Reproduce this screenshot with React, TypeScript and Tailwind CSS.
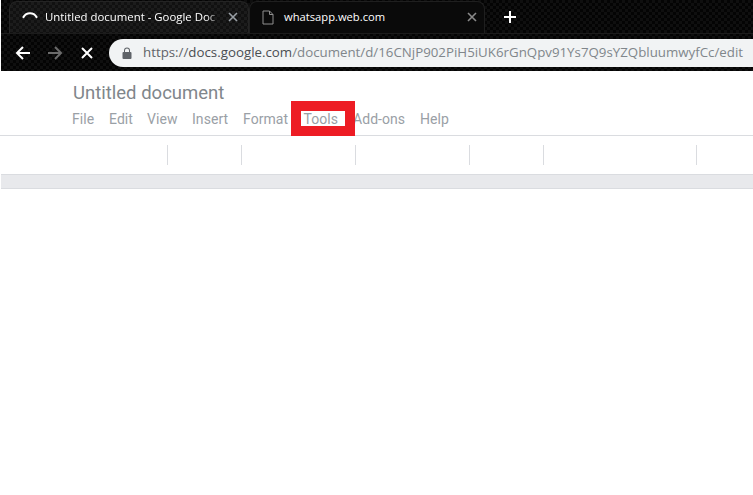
import React from "react";

const sans = "font-['Open_Sans','Noto_Sans',sans-serif]";

function Menu({ label, w }: { label: string; w: string }) {
  return <span className={`${w} shrink-0`}>{label}</span>;
}

function Sep({ w }: { w: string }) {
  return <div className={`${w} h-[20px] shrink-0 border-r border-[#dadce0]`} />;
}

export default function App() {
  const checker =
    "bg-[repeating-conic-gradient(#0f0f0f_0%_25%,#040404_0%_50%)] bg-[length:6px_6px]";
  const activeChecker =
    "bg-[repeating-conic-gradient(#1c1c1c_0%_25%,#111111_0%_50%)] bg-[length:6px_6px]";
  return (
    <div className="w-[753px] h-[495px] bg-white overflow-hidden relative font-['Roboto',sans-serif]">
      <div className={`ml-[1px] h-[71px] ${checker} flex flex-col`}>
        <div className="h-[33px] flex items-end pl-[8px] shrink-0">
          <div className={`w-[240px] h-[32px] ${activeChecker} border-t border-x border-[#242424] rounded-t-[8px] flex items-center pl-[11px] ${sans}`}>
            <svg width="18" height="16" viewBox="0 0 18 16" fill="none" className="shrink-0 -mt-[1px]">
              <path d="M2.5 8A7.5 7.5 0 0 1 15.5 8" stroke="#fff" strokeWidth="2.2" strokeLinecap="round" />
            </svg>
            <span className="ml-[6px] -mt-[1px] w-[178px] whitespace-nowrap text-[11.4px] text-white [mask-image:linear-gradient(to_right,#000_90%,transparent)]">
              Untitled document - Google Doc
            </span>
            <svg width="10" height="10" viewBox="0 0 10 10" className="ml-[5px] -mt-[1px] shrink-0" stroke="#9aa0a6" strokeWidth="1.6">
              <path d="M1 1L9 9M9 1L1 9" />
            </svg>
          </div>
          <div className={`w-[236px] h-[32px] bg-[#0a0a0a] border-t border-x border-[#1f1f1f] rounded-t-[8px] flex items-center pl-[12px] ${sans}`}>
            <svg width="12" height="15" viewBox="0 0 12 15" fill="none" stroke="#8f8f8f" strokeWidth="1" className="shrink-0 -mt-[1px]">
              <path d="M1 1H7.5L11 4.5V14H1Z" />
              <path d="M7.5 1V4.5H11" />
            </svg>
            <span className="ml-[10px] -mt-[1px] w-[183px] text-[11.2px] text-white whitespace-nowrap">whatsapp.web.com</span>
            <svg width="10" height="10" viewBox="0 0 10 10" className="-mt-[1px] shrink-0" stroke="#8a8a8a" strokeWidth="1.6">
              <path d="M1 1L9 9M9 1L1 9" />
            </svg>
          </div>
          <svg width="12" height="12" viewBox="0 0 12 12" className="ml-[19px] mb-[10px] shrink-0" stroke="#fff" strokeWidth="2">
            <path d="M6 0V12M0 6H12" />
          </svg>
        </div>
        <div className="flex-1 flex items-center border-t border-[#1c1c1c]">
          <svg width="16" height="16" viewBox="0 0 16 16" fill="none" stroke="#fff" strokeWidth="2" className="ml-[14px] shrink-0">
            <path d="M15 8H2M8 2L2 8L8 14" />
          </svg>
          <svg width="16" height="16" viewBox="0 0 16 16" fill="none" stroke="#6b6b6b" strokeWidth="2" className="ml-[16px] shrink-0">
            <path d="M1 8H14M8 2L14 8L8 14" />
          </svg>
          <svg width="12" height="12" viewBox="0 0 12 12" stroke="#fff" strokeWidth="2" className="ml-[18px] shrink-0">
            <path d="M1 1L11 11M11 1L1 11" />
          </svg>
          <div className={`ml-[16px] h-[28px] flex-1 bg-[#f1f3f4] rounded-l-[14px] flex items-center pl-[13px] ${sans}`}>
            <svg width="10" height="12" viewBox="0 0 10 12" fill="#5f6368" className="shrink-0">
              <path d="M2 5V3.5a3 3 0 0 1 6 0V5H7V3.5a2 2 0 0 0-4 0V5Z" />
              <rect x="0.5" y="5" width="9" height="7" rx="1" />
            </svg>
            <span className="ml-[11px] text-[13.3px] whitespace-nowrap text-[#80868b]">
              <span className="text-[#5f6368]">https://</span><span className="text-[#4a4e52]">docs.google.com</span>/document/d/16CNjP902PiH5iUK6rGnQpv91Ys7Q9sYZQbluumwyfCc/edit
            </span>
          </div>
        </div>
      </div>

      <div className="h-[65px] pl-[73px] pt-[10px] border-b border-[#dadce0] box-border">
        <div className="text-[18.5px] leading-[24px] text-[#80868b]">Untitled document</div>
        <div className="-ml-[1px] mt-[4px] flex text-[14px] tracking-[0.05px] leading-[20px] text-[#9aa0a6]">
          <Menu label="File" w="w-[37px]" />
          <Menu label="Edit" w="w-[38px]" />
          <Menu label="View" w="w-[45px]" />
          <Menu label="Insert" w="w-[51px]" />
          <Menu label="Format" w="w-[60.5px]" />
          <Menu label="Tools" w="w-[49.5px]" />
          <Menu label="Add-ons" w="w-[67px]" />
          <Menu label="Help" w="w-[40px]" />
        </div>
      </div>

      <div className="h-[38px] pt-[9px] flex items-start">
        <Sep w="w-[168px]" />
        <Sep w="w-[74px]" />
        <Sep w="w-[114px]" />
        <Sep w="w-[114px]" />
        <Sep w="w-[74px]" />
        <Sep w="w-[153px]" />
      </div>

      <div className="h-[15px] ml-[1px] bg-[#e8e9ec] border-y border-[#dadce0]" />

      <div className="absolute left-[291px] top-[101px] w-[64px] h-[35px] border-[10px] border-[#ed1c24]" />
    </div>
  );
}
